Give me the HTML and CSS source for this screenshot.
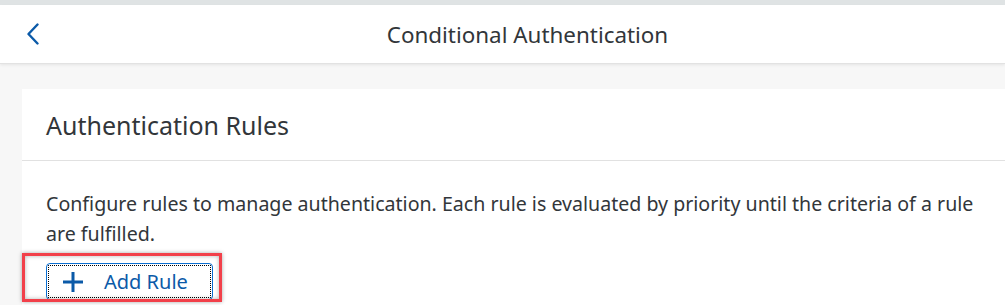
FILE: index.html
```html
<!DOCTYPE html>
<html lang="en">
<head>
<meta charset="utf-8">
<title>Conditional Authentication</title>
<link rel="stylesheet" href="styles.css">
</head>
<body>
<div class="topstrip"></div>
<header class="header">
  <button class="back" aria-label="Back">
    <svg width="14" height="22" viewBox="0 0 14 22"><path d="M11.5 1.5 L2.5 11 L11.5 20.5" fill="none" stroke="#0b5aa8" stroke-width="2.4" stroke-linecap="round" stroke-linejoin="round"/></svg>
  </button>
  <h1 class="title">Conditional Authentication</h1>
</header>
<main class="content">
  <section class="card">
    <div class="card-header">
      <h2 class="card-title">Authentication Rules</h2>
    </div>
    <div class="card-body">
      <p class="desc">Configure rules to manage authentication. Each rule is evaluated by priority until the criteria of a rule are fulfilled.</p>
      <div class="actions">
        <button class="add-btn">
          <span class="focus-ring"></span>
          <svg class="plus" width="22" height="22" viewBox="0 0 22 22"><path d="M11 1 V21 M1 11 H21" stroke="#0b5aa8" stroke-width="3" fill="none"/></svg>
          <span class="add-label">Add Rule</span>
        </button>
        <div class="highlight"></div>
      </div>
    </div>
  </section>
</main>
</body>
</html>
```

FILE: styles.css
```css
* { box-sizing: border-box; }
html, body { margin: 0; padding: 0; }
body {
  background: #f7f7f7;
  font-family: "Noto Sans", "Open Sans", sans-serif;
  color: #32363a;
  height: 305px;
  overflow: hidden;
  display: flex;
  flex-direction: column;
}
.topstrip {
  height: 5px;
  flex: none;
  background: #dfe3e4;
}
.header {
  height: 58px;
  flex: none;
  background: #fff;
  display: flex;
  align-items: center;
  box-shadow: 0 1px 0 #e2e2e2, 0 2px 3px rgba(0,0,0,0.08);
  position: relative;
  z-index: 1;
}
.back {
  width: 50px;
  height: 58px;
  border: 0;
  background: transparent;
  padding: 0 0 0 26px;
  display: flex;
  align-items: center;
  justify-content: flex-start;
}
.title {
  flex: 1;
  margin: 0;
  text-align: center;
  font-weight: 400;
  font-size: 22.4px;
  color: #32363a;
}
.content {
  flex: 1;
  display: flex;
  flex-direction: column;
  padding: 26px 0 0 22px;
}
.card {
  flex: 1;
  background: #fff;
}
.card-header {
  height: 72px;
  padding: 0 24px;
  display: flex;
  align-items: center;
  border-bottom: 1px solid #e1e1e1;
}
.card-title {
  margin: 0;
  font-weight: 400;
  font-size: 25px;
  color: #32363a;
}
.card-body {
  padding: 28px 20px 0 24px;
}
.desc {
  margin: 0;
  font-size: 19.6px;
  line-height: 30px;
  color: #32363a;
}
.actions {
  position: relative;
  padding-top: 14px;
}
.add-btn {
  position: relative;
  width: 167px;
  height: 37px;
  border: 1px solid #0a6ed1;
  border-radius: 4px;
  background: #fff;
  display: flex;
  align-items: center;
  padding: 0 0 0 15px;
  font-family: inherit;
  cursor: pointer;
}
.focus-ring {
  position: absolute;
  inset: 1px;
  border: 1px dotted #000;
  border-radius: 1px;
}
.plus { flex: none; }
.add-label {
  margin-left: 20px;
  font-size: 20px;
  color: #0b5aa8;
}
.highlight {
  position: absolute;
  left: -24px;
  top: 4px;
  width: 200px;
  height: 49px;
  border: 3px solid #f2404a;
  box-shadow: 0 0 4px rgba(0,0,0,0.35), inset 0 0 4px rgba(0,0,0,0.3);
  pointer-events: none;
}
```
